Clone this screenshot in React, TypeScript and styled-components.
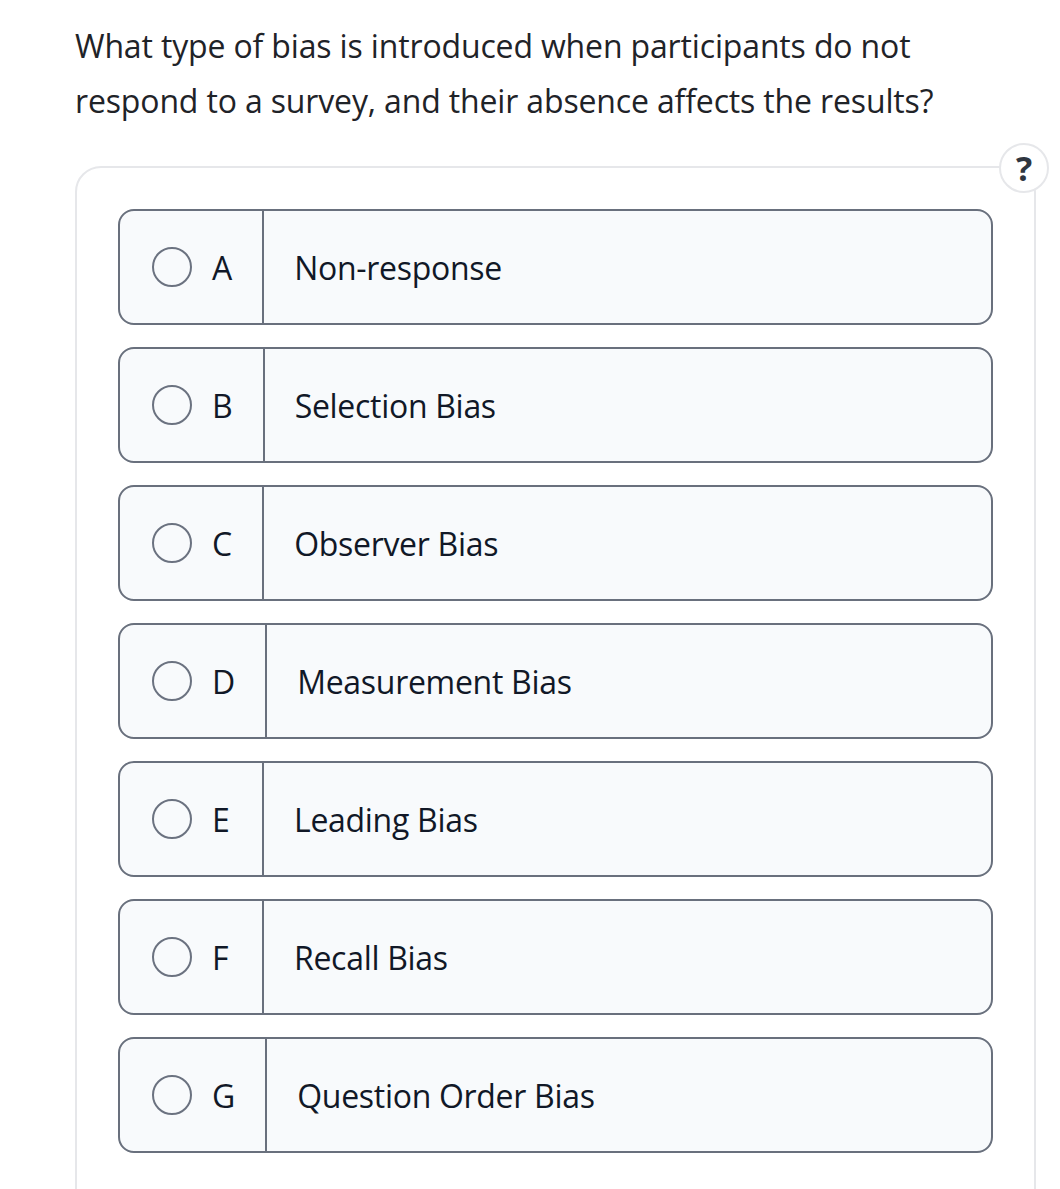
import React from "react";
import styled, { createGlobalStyle } from "styled-components";

const Global = createGlobalStyle`
  html, body { margin: 0; padding: 0; background: #ffffff; }
  body { font-family: "Open Sans", "Noto Sans", sans-serif; color: #111827; }
`;

const Page = styled.div`
  width: 1060px;
  min-height: 1189px;
  box-sizing: border-box;
  padding: 18px 24px 0 75px;
  overflow: hidden;
`;

const Question = styled.h1`
  margin: 0 0 38px 0;
  max-width: 900px;
  font-size: 32px;
  line-height: 55px;
  font-weight: 500;
  letter-spacing: -0.15px;
  color: #1f2328;
`;

const Panel = styled.div`
  position: relative;
  box-sizing: border-box;
  width: 961px;
  min-height: 1040px;
  border: 2px solid #e6e7ea;
  border-radius: 26px;
  padding: 41px 41px 60px;
  display: flex;
  flex-direction: column;
  gap: 22px;
`;

const HelpBadge = styled.div`
  position: absolute;
  top: -25px;
  right: -15px;
  width: 50px;
  height: 50px;
  box-sizing: border-box;
  border-radius: 50%;
  border: 2px solid #e6e7ea;
  background: #ffffff;
  display: flex;
  align-items: center;
  justify-content: center;
  font-size: 34px;
  font-weight: 700;
  line-height: 1;
  color: #2f3640;
`;

const Option = styled.label`
  box-sizing: border-box;
  height: 116px;
  display: flex;
  align-items: stretch;
  border: 2px solid #69707d;
  border-radius: 16px;
  background: #f8fafc;
  cursor: pointer;
`;

const KeyCell = styled.div`
  display: flex;
  align-items: center;
  gap: 20px;
  padding: 0 30px 0 32px;
  border-right: 2px solid #69707d;
`;

const Radio = styled.span`
  width: 40px;
  height: 40px;
  box-sizing: border-box;
  border-radius: 50%;
  border: 2px solid #6b7280;
  flex-shrink: 0;
`;

const Letter = styled.span`
  font-size: 32px;
  font-weight: 400;
  color: #111827;
  min-width: 20px;
`;

const Answer = styled.div`
  display: flex;
  align-items: center;
  padding-left: 30px;
  font-size: 32px;
  font-weight: 400;
  letter-spacing: -0.3px;
  color: #111827;
`;

const options = [
  ["A", "Non-response"],
  ["B", "Selection Bias"],
  ["C", "Observer Bias"],
  ["D", "Measurement Bias"],
  ["E", "Leading Bias"],
  ["F", "Recall Bias"],
  ["G", "Question Order Bias"],
];

export default function App() {
  return (
    <>
      <Global />
      <Page>
        <Question>
          What type of bias is introduced when participants do not respond to a survey, and their
          absence affects the results?
        </Question>
        <Panel>
          <HelpBadge>?</HelpBadge>
          {options.map(([k, t]) => (
            <Option key={k}>
              <KeyCell>
                <Radio />
                <Letter>{k}</Letter>
              </KeyCell>
              <Answer>{t}</Answer>
            </Option>
          ))}
        </Panel>
      </Page>
    </>
  );
}
